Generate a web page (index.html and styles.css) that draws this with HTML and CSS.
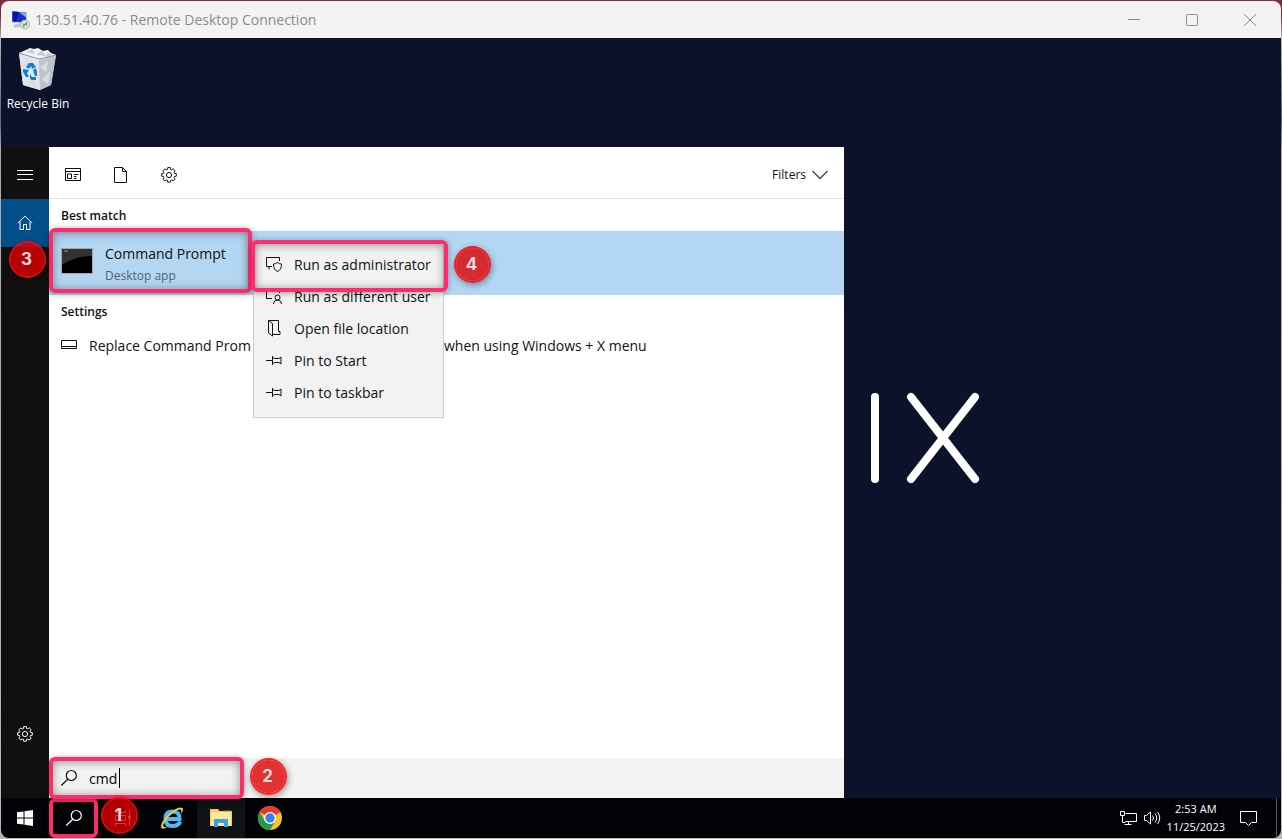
FILE: index.html
```html
<!DOCTYPE html>
<html lang="en">
<head>
<meta charset="utf-8">
<title>130.51.40.76 - Remote Desktop Connection</title>
<link rel="stylesheet" href="styles.css">
</head>
<body>
<svg class="defs" aria-hidden="true">
  <symbol id="gear" viewBox="0 0 16 16">
    <path d="M6.7.6h2.6l.3 1.9 1 .4 1.600-1.100 1.900 1.900-1.100 1.600.4 1 1.900.3v2.600l-1.900.3-.4 1 1.100 1.600-1.900 1.900-1.600-1.100-1 .4-.3 1.900H6.700l-.3-1.900-1-.4-1.600 1.100-1.900-1.900 1.100-1.600-.4-1-1.900-.3V6.700l1.900-.3.4-1-1.100-1.600 1.900-1.900 1.600 1.100 1-.4z" fill="none" stroke="currentColor"/>
    <circle cx="8" cy="8" r="2.600" fill="none" stroke="currentColor"/>
  </symbol>
  <symbol id="search" viewBox="0 0 18 18">
    <circle cx="11.300" cy="6.500" r="5" fill="none" stroke="currentColor" stroke-width="1.200"/>
    <path d="M7.700 10.200 1.300 16.500" stroke="currentColor" stroke-width="1.200"/>
  </symbol>
  <symbol id="pin" viewBox="0 0 18 16">
    <path d="M1 8.500h6M7.500 4v9M7.500 5.500 10 6.500h4l2-1.500v7l-2-1.500h-4l-2.500 1" fill="none" stroke="currentColor"/>
  </symbol>
</svg>
<div class="window">
  <header class="titlebar">
    <svg class="app-icon" viewBox="0 0 20 20">
      <path d="M2 1 17 2v11L2 13z" fill="#c5cddd"/>
      <path d="M2.500 1.500 16 2.500v10L2.500 11.500z" fill="#1a2fc4"/>
      <path d="M2.500 1.500 9 2 6 11.800 2.500 11.500z" fill="#0713a0"/>
      <path d="M9 2l7 .5v5z" fill="#8aa6f0"/>
      <path d="M3 15l7-2 4 3-9 2z" fill="#c2c8cf"/>
      <circle cx="15" cy="14.500" r="4.500" fill="#dfe3e0" stroke="#9da49f" stroke-width=".8"/>
      <path d="M13 14l1.500 1-1.500 2M17 12.500l-1.500 1.500 1.500 1" fill="none" stroke="#35a23b" stroke-width="1.200"/>
    </svg>
    <h1 class="title">130.51.40.76 - Remote Desktop Connection</h1>
    <div class="controls">
      <button class="control" aria-label="Minimize"><svg viewBox="0 0 14 14"><path d="M1 6.500h12"/></svg></button>
      <button class="control" aria-label="Maximize"><svg viewBox="0 0 14 14"><rect x="1.500" y="1.500" width="11" height="11" rx="1"/></svg></button>
      <button class="control" aria-label="Close"><svg viewBox="0 0 14 14"><path d="M1 1l12 12M13 1 1 13"/></svg></button>
    </div>
  </header>

  <main class="desktop">
    <svg class="wallpaper-mark" viewBox="0 0 110 92"><path d="M5 5v82M41 5l64 82M105 5 41 87"/></svg>
    <a class="shortcut" href="#">
      <svg class="bin" viewBox="0 0 40 44">
        <path d="M1 6 38 8 33 38 22 43 5 38z" fill="#c9cdd1"/>
        <path d="M1 6 21 12 22 43 5 38z" fill="#e2e4e7"/>
        <path d="M21 12 38 8 33 38 22 43z" fill="#bfc3c8"/>
        <path d="M22 20l8-6-2 12zM24 32l8-8-2 13zM4 20l6-8 2 10zM8 37l6-7 6 11z" fill="#d9dce0"/>
        <path d="M1 6 8 3l4-2 4 1 4-1 5 3 5-1 3 3 5 2-17 5z" fill="#f4f5f6"/>
        <path d="M8 5l6-3 3 5zM18 8l6-5 4 6zM29 5l5 3-6 2z" fill="#c7cbd0"/>
        <path d="M1 6 21 12 38 8" fill="none" stroke="#8d939b"/>
        <g fill="#0b7fdb"><path d="M8 20l3-4h4l3 4-4 2-1-3-2 3z"/><path d="M5 22l6 1-2 3 2 4H8l-3-5z"/><path d="M12 27l2 3h4v3h-4l-2-1z"/><path d="M15 23l3-2 1 4 0 4-2 0z"/></g>
      </svg>
      <span>Recycle Bin</span>
    </a>

    <section class="start">
      <nav class="rail">
        <button class="rail-item tall" aria-label="Menu"><svg width="16" height="12" viewBox="0 0 16 12"><path d="M0 1.500h16M0 5.500h16M0 10.500h16"/></svg></button>
        <button class="rail-item active" aria-label="Home"><svg width="16" height="16" viewBox="0 0 16 16"><path d="M.8 8 8 1.200 15.200 8M3 6.500v8h3.500v-5h3v5H13v-8"/></svg></button>
        <button class="rail-item last" aria-label="Settings"><svg width="16" height="16"><use href="#gear"/></svg></button>
      </nav>
      <div class="results">
        <div class="scopes">
          <button class="scope" aria-label="Apps"><svg width="16" height="14" viewBox="0 0 16 14"><path d="M.5.500h15v12H.500zM.5 3.500h15M2.500 6h4v4.500h-4zM9 6.500h4.500M9 8.500h2.500M9 10.500h2.500"/></svg></button>
          <button class="scope" aria-label="Documents"><svg width="16" height="16" viewBox="0 0 16 16"><path d="M1.500.5h8l4 4v11h-12zM9.500.5v4h4"/></svg></button>
          <button class="scope" aria-label="Settings"><svg width="16" height="16"><use href="#gear"/></svg></button>
          <button class="filters">Filters <svg width="16" height="10" viewBox="0 0 16 10"><path d="M.5 1 8 8.500 15.500 1"/></svg></button>
        </div>
        <h2 class="group">Best match</h2>
        <a class="best" href="#">
          <svg class="cmd-icon" viewBox="0 0 32 26">
            <rect x=".5" y=".5" width="31" height="25" fill="#000" stroke="#a5a8ab"/>
            <path d="M1 1h30v7Q14 8 1 17z" fill="#333"/>
            <path d="M3 3h4" stroke="#999"/>
          </svg>
          <span class="best-text"><span class="name">Command Prompt</span><span class="kind">Desktop app</span></span>
        </a>
        <h2 class="group">Settings</h2>
        <a class="setting" href="#">
          <svg width="16" height="10" viewBox="0 0 16 10"><path d="M.5.500h15v8H.500zM.5 6.500h15"/></svg>
          <span class="setting-start">Replace Command Prom</span>
          <span>when using Windows + X menu</span>
        </a>
        <label class="searchbar">
          <svg width="18" height="18"><use href="#search"/></svg>
          <input class="query" type="text" value="cmd" aria-label="Search">
          <span class="caret"></span>
        </label>
      </div>
    </section>

    <menu class="context">
      <li><button><svg viewBox="0 0 18 18"><path d="M7 11.500H4v3M4 11.500H1.500v-9h13V6M12.500 7.500q2 1.500 4 1.500 0 6-4 7.500-4-1.500-4-7.500 2 0 4-1.500z"/></svg>Run as administrator</button></li>
      <li><button><svg viewBox="0 0 18 18"><path d="M7 11.500H1.500v-9h13V6M8.500 17q0-4 4-4t4 4"/><circle cx="12.500" cy="10.500" r="2.500"/></svg>Run as different user</button></li>
      <li><button><svg viewBox="0 0 18 18"><path d="M3.500 1.500h10v11h1.500v3H8M3.500 1.500l4 3V17l-4-3z"/></svg>Open file location</button></li>
      <li><button><svg viewBox="0 0 18 16"><use href="#pin"/></svg>Pin to Start</button></li>
      <li><button><svg viewBox="0 0 18 16"><use href="#pin"/></svg>Pin to taskbar</button></li>
    </menu>
  </main>

  <footer class="taskbar">
    <button class="task" aria-label="Start"><svg width="16" height="16" viewBox="0 0 16 16"><path fill="#fff" d="M0 2.300 6.500 1.400v6.100H0zM7.500 1.200 16 0v7.500H7.500zM0 8.500h6.500v6.100L0 13.700zM7.500 8.500H16V16l-8.500-1.200z"/></svg></button>
    <button class="task" aria-label="Search"><svg width="18" height="18"><use href="#search"/></svg></button>
    <button class="task" aria-label="Task view"><svg width="18" height="16" viewBox="0 0 18 16"><path d="M1.500 0v2.500h10V0M1.500 5.500h10v5h-10zM1.500 16v-2.500h10V16M15.500 0v5M15.500 9v7" fill="none" stroke="#fff"/><path d="M14 5.500h3v3h-3z" fill="#fff"/></svg></button>
    <button class="task" aria-label="Internet Explorer"><svg width="24" height="24" viewBox="0 0 24 24">
      <path d="M20.500 15.500Q18 20 12.500 20 5.500 20 5.500 12.500 5.500 5.500 12.500 5.500 20 5.500 19.500 13H6" fill="none" stroke="#47bdf3" stroke-width="4"/>
      <path d="M1.500 22Q-.5 18 7 10 18-.5 22.500 2 24 4 21 8 22 4.500 20.500 3.500 17 3 9 10.500 2 18 3.500 20.500 5 22 9 20 4 24 1.500 22z" fill="#f6cd36"/></svg></button>
    <button class="task open" aria-label="File Explorer"><svg width="22" height="20" viewBox="0 0 22 20">
      <path d="M0 1h8l1.500 2H22v15H0z" fill="#f5c95c"/><path d="M1 4h20v14H1z" fill="#ffe79b"/><path d="M13 3h7" stroke="#5aa84c"/>
      <path d="M4 18v-7h14v8h-4v-4H8v4H4z" fill="#35a6e0"/></svg></button>
    <button class="task" aria-label="Chrome"><svg width="24" height="24" viewBox="0 0 24 24">
      <circle cx="12" cy="12" r="12" fill="#f9c51f"/><path d="M12 12 1.600 6A12 12 0 0 1 22.400 6z" fill="#e33b2e"/><path d="M1.600 6A12 12 0 0 0 12 24l5.200-9H6.800z" fill="#219a50"/>
      <circle cx="12" cy="12" r="6" fill="#fff"/><circle cx="12" cy="12" r="4.700" fill="#3b7de9"/></svg></button>
    <div class="tray">
      <svg width="17" height="15" viewBox="0 0 17 15"><path d="M5.500 2.500h11v8h-11M4.500 13.500h7M8.500 10.500v3M.5.500h4v4h-4zM2.500 4.500v7h3"/></svg>
      <svg width="18" height="16" viewBox="0 0 18 16"><path d="M1.500 5.500h2l4-3.500v12l-4-3.500h-2zM9.500 5.500q2 2.500 0 5M12 3.500q3.500 4.500 0 9M14.500 2q4.500 6 0 12"/></svg>
      <time class="clock"><span>2:53 AM</span><span>11/25/2023</span></time>
      <svg width="17" height="17" viewBox="0 0 17 17"><path d="M.5 1.500h16v11h-5l-3 3-3-3h-5z"/></svg>
    </div>
  </footer>

  <div class="frame frame-task"></div>
  <div class="frame frame-search"></div>
  <div class="frame frame-app"></div>
  <div class="frame frame-admin"></div>
  <span class="badge badge-1">1</span>
  <span class="badge badge-2">2</span>
  <span class="badge badge-3">3</span>
  <span class="badge badge-4">4</span>
</div>
</body>
</html>
```
FILE: styles.css
```css
* { box-sizing: border-box; }
body {
  margin: 0;
  padding: 1px;
  height: 100vh;
  background: linear-gradient(#7e2e3b 16px, #b4b8b2 40px, #52697e 120px, #aaa 150px, #b8b6b2);
  font-family: "Open Sans", "Noto Sans", sans-serif;
  font-size: 14px;
  color: #111;
}
button { border: 0; padding: 0; background: none; font: inherit; color: inherit; }
a { color: inherit; text-decoration: none; }
svg { flex: none; }
.defs { position: absolute; width: 0; height: 0; }

.window {
  position: relative;
  height: 100%;
  display: flex;
  flex-direction: column;
  border-radius: 8px;
  overflow: hidden;
}
.titlebar {
  display: flex;
  align-items: center;
  height: 37px;
  padding: 0 2px 0 9px;
  background: #f3f3f3;
  color: #8b8b8b;
}
.app-icon { width: 20px; height: 20px; margin-right: 5px; }
.title { margin: 0; flex: 1; font-size: 14px; font-weight: 400; }
.controls { display: flex; }
.control { width: 58px; height: 36px; display: grid; place-items: center; }
.control svg { width: 14px; height: 14px; fill: none; stroke: #8b8b8b; }

.desktop { position: relative; flex: 1; background: #0d122b; }
.wallpaper-mark {
  position: absolute;
  left: 869px;
  top: 354px;
  width: 110px;
  height: 92px;
  fill: none;
  stroke: #fff;
  stroke-width: 8px;
  stroke-linecap: round;
}
.shortcut {
  display: flex;
  flex-direction: column;
  align-items: center;
  gap: 4px;
  width: 74px;
  padding-top: 9px;
  color: #fff;
  font-size: 12px;
}
.bin { width: 40px; height: 44px; }

.start {
  position: absolute;
  left: 0;
  top: 109px;
  bottom: 0;
  width: 843px;
  display: flex;
}
.rail { display: flex; flex-direction: column; width: 48px; padding-bottom: 40px; background: #101010; }
.rail-item { height: 48px; display: grid; place-items: center; color: #fff; }
.rail-item svg { fill: none; stroke: #fff; }
.tall { height: 52px; padding-top: 4px; }
.active { background: #044e8a; }
.last { margin-top: auto; }

.results { flex: 1; display: flex; flex-direction: column; background: #fff; }
.scopes {
  display: flex;
  align-items: center;
  height: 52px;
  padding: 4px 16px 0 0;
  border-bottom: 1px solid #e3e3e3;
}
.scope { width: 48px; height: 40px; display: grid; place-items: center; }
.scope svg { fill: none; stroke: #111; }
.filters { display: flex; align-items: center; gap: 6px; margin-left: auto; font-size: 12px; }
.filters svg { fill: none; stroke: #444; stroke-width: 1.3px; }
.group { margin: 0; padding: 2px 0 0 12px; font-size: 12px; font-weight: 600; line-height: 30px; }
.best { display: flex; align-items: center; gap: 12px; height: 64px; padding: 0 12px; background: #b3d6f2; }
.cmd-icon { width: 32px; height: 26px; margin-bottom: 4px; }
.best-text { display: flex; flex-direction: column; padding-top: 2px; }
.name { line-height: 24px; }
.kind { font-size: 12px; line-height: 20px; color: #52636f; }
.setting { display: flex; align-items: center; gap: 12px; height: 36px; padding: 0 12px; white-space: nowrap; }
.setting svg { fill: none; stroke: #111; }
.setting-start { width: 343px; }
.searchbar {
  position: relative;
  display: flex;
  align-items: center;
  gap: 11px;
  height: 40px;
  margin-top: auto;
  padding: 0 11px;
  background: #f2f2f2;
}
.query { flex: 1; border: 0; padding: 0; background: none; outline: 0; font: inherit; }
.caret { position: absolute; left: 70px; top: 10px; width: 1px; height: 20px; background: #000; }

.context {
  position: absolute;
  left: 252px;
  top: 202px;
  width: 191px;
  margin: 0;
  padding: 7px 0 9px;
  list-style: none;
  background: #f2f2f2;
  border: 1px solid #ccc;
}
.context button { display: flex; align-items: center; gap: 11px; width: 100%; height: 32px; padding-left: 11px; white-space: nowrap; }
.context svg { width: 18px; height: 18px; fill: none; stroke: #111; }

.taskbar { display: flex; gap: 1px; height: 40px; background: #020306; color: #fff; }
.task { width: 48px; display: grid; place-items: center; }
.open { background: #101216; }
.tray {
  display: flex;
  align-items: center;
  gap: 6px;
  margin: 0 4px 0 auto;
  padding-right: 19px;
  border-right: 1px solid #555;
}
.tray svg { fill: none; stroke: #fff; }
.clock { display: flex; flex-direction: column; align-items: center; margin-right: 9px; font-size: 11px; line-height: 18px; }

.frame {
  position: absolute;
  border: 4px solid #ff2c6b;
  border-radius: 6px;
  box-shadow: 0 1px 6px rgba(0, 0, 0, .35), inset 0 1px 10px rgba(0, 0, 0, .4);
  pointer-events: none;
}
.frame-task { left: 48px; top: 797px; width: 49px; height: 40px; }
.frame-search { left: 48px; top: 756px; width: 195px; height: 42px; }
.frame-app { left: 48px; top: 227px; width: 203px; height: 65px; }
.frame-admin { left: 250px; top: 239px; width: 197px; height: 52px; }
.badge {
  position: absolute;
  display: grid;
  place-items: center;
  width: 37px;
  height: 37px;
  padding-right: 2px;
  border: 2px solid rgba(245, 10, 15, .9);
  border-radius: 50%;
  background: rgba(220, 0, 0, .8);
  background-clip: padding-box;
  box-shadow: 1px 2px 6px rgba(0, 0, 0, .4);
  color: #f5dcdc;
  font: 700 17px/1 Inter, sans-serif;
}
.badge-1 { left: 100px; top: 796px; }
.badge-2 { left: 249px; top: 757px; }
.badge-3 { left: 8px; top: 240px; }
.badge-4 { left: 453px; top: 245px; }
```
